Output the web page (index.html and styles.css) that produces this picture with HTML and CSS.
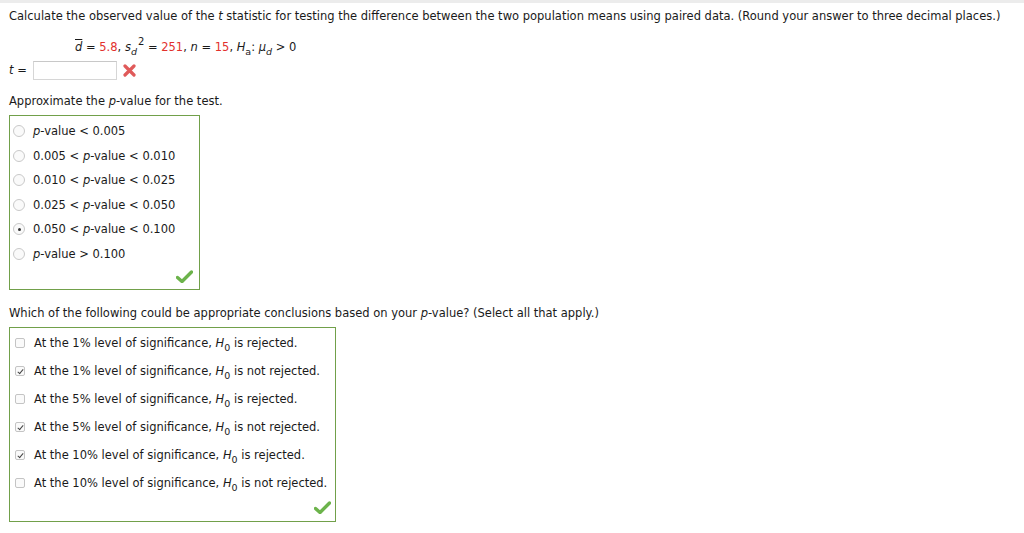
FILE: index.html
```html
<!DOCTYPE html>
<html>
<head>
<meta charset="utf-8">
<link rel="stylesheet" href="styles.css">
</head>
<body>
<div class="topbar"></div>
<div class="page">
  <p class="q">Calculate the observed value of the <i>t</i> statistic for testing the difference between the two population means using paired data. (Round your answer to three decimal places.)</p>
  <p class="formula"><span class="dbar">d</span> = <span class="red">5.8</span>, <i>s</i><sub><i>d</i></sub><sup class="sq">2</sup> = <span class="red">251</span>, <i>n</i> = <span class="red">15</span>, <i>H</i><sub>a</sub>: <i>μ</i><sub><i>d</i></sub> &gt; 0</p>
  <div class="answer">
    <span class="tlabel"><i>t</i> =</span>
    <span class="input"></span>
    <svg class="xmark" width="13" height="13" viewBox="0 0 13 13"><path d="M2 2 L11 11 M11 2 L2 11" stroke="#e05a5a" stroke-width="3.2" stroke-linecap="round"/></svg>
  </div>
  <p class="q2">Approximate the <i>p</i>-value for the test.</p>
  <div class="box box1">
    <div class="opt"><span class="radio"></span><span><i>p</i>-value &lt; 0.005</span></div>
    <div class="opt"><span class="radio"></span><span>0.005 &lt; <i>p</i>-value &lt; 0.010</span></div>
    <div class="opt"><span class="radio"></span><span>0.010 &lt; <i>p</i>-value &lt; 0.025</span></div>
    <div class="opt"><span class="radio"></span><span>0.025 &lt; <i>p</i>-value &lt; 0.050</span></div>
    <div class="opt"><span class="radio on"></span><span>0.050 &lt; <i>p</i>-value &lt; 0.100</span></div>
    <div class="opt"><span class="radio"></span><span><i>p</i>-value &gt; 0.100</span></div>
    <div class="okrow"><svg class="ok" width="17" height="13" viewBox="0 0 17 13"><path d="M1.5 7.5 L6 11.5 L15.5 2" fill="none" stroke="#6cb34b" stroke-width="3.4" stroke-linejoin="round" stroke-linecap="round"/></svg></div>
  </div>
  <p class="q3">Which of the following could be appropriate conclusions based on your <i>p</i>-value? (Select all that apply.)</p>
  <div class="box box2">
    <div class="opt2"><span class="cb"></span><span>At the 1% level of significance, <i>H</i><sub>0</sub> is rejected.</span></div>
    <div class="opt2"><span class="cb on"></span><span>At the 1% level of significance, <i>H</i><sub>0</sub> is not rejected.</span></div>
    <div class="opt2"><span class="cb"></span><span>At the 5% level of significance, <i>H</i><sub>0</sub> is rejected.</span></div>
    <div class="opt2"><span class="cb on"></span><span>At the 5% level of significance, <i>H</i><sub>0</sub> is not rejected.</span></div>
    <div class="opt2"><span class="cb on"></span><span>At the 10% level of significance, <i>H</i><sub>0</sub> is rejected.</span></div>
    <div class="opt2"><span class="cb"></span><span>At the 10% level of significance, <i>H</i><sub>0</sub> is not rejected.</span></div>
    <div class="okrow okrow2"><svg class="ok" width="17" height="13" viewBox="0 0 17 13"><path d="M1.5 7.5 L6 11.5 L15.5 2" fill="none" stroke="#6cb34b" stroke-width="3.4" stroke-linejoin="round" stroke-linecap="round"/></svg></div>
  </div>
</div>
</body>
</html>
```
FILE: styles.css
```css
html, body { margin: 0; padding: 0; background: #fff; }
body {
  font-family: "DejaVu Sans", Verdana, sans-serif;
  font-size: 11.5px;
  color: #1a1a1a;
}
.topbar { height: 3px; background: #ececec; }
.page { padding: 0 9px; }
p { margin: 0; }
.q { padding-top: 6px; line-height: 14px; }
.formula { padding-top: 17px; padding-left: 66px; line-height: 14px; }
.red { color: #e2302d; }
.dbar { font-style: italic; text-decoration: overline; }
sub { font-size: 9.5px; vertical-align: -4px; line-height: 0; }
.sq { font-size: 10px; vertical-align: 6px; line-height: 0; margin-left: 1px; }
.answer { display: flex; align-items: center; margin-top: 6px; height: 20px; }
.tlabel { width: 24px; }
.input { width: 82px; height: 17px; border: 1px solid #d6d6d6; border-top-color: #c8c8c8; background: #fff; }
.xmark { margin-left: 6px; }
.q2 { margin-top: 14px; line-height: 14px; }
.box { border: 1px solid #71a04a; box-sizing: border-box; margin-top: 7px; }
.box1 { width: 191px; padding: 3px 0 0 3px; height: 175px; }
.opt { display: flex; align-items: center; height: 24.5px; }
.radio { width: 12px; height: 12px; border-radius: 50%; border: 1px solid #c9c9c9; box-sizing: border-box; margin-right: 8px; background: #fafafa; position: relative; }
.radio.on::after { content: ""; position: absolute; left: 3.5px; top: 3.5px; width: 3px; height: 3px; border-radius: 50%; background: #333; }
.okrow { display: flex; justify-content: flex-end; padding-right: 6px; margin-top: 4px; }
.q3 { margin-top: 16px; line-height: 14px; }
.box2 { width: 327px; padding: 1px 0 0 5px; height: 195px; }
.opt2 { display: flex; align-items: center; height: 28px; }
.cb { width: 10px; height: 10px; border: 1px solid #c4c4c4; border-radius: 2px; box-sizing: border-box; margin-right: 9px; background: #fafafa; position: relative; }
.cb.on::after { content: ""; position: absolute; left: 2.5px; top: 0.5px; width: 2px; height: 5px; border: solid #444; border-width: 0 1px 1px 0; transform: rotate(40deg); }
.okrow2 { padding-right: 4px; margin-top: 4px; }
```
